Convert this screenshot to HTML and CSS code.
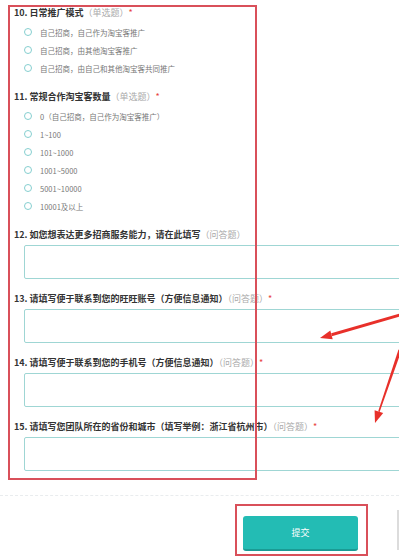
FILE: index.html
```
<!DOCTYPE html>
<html>
<head>
	<meta charset="utf-8">
	<title>问卷</title>
	<link rel="stylesheet" href="styles.css">
</head>
<body>

	<main class="page">
		<div class="question first">
			<div class="q-title">10. 日常推广模式<span class="q-type">（单选题）</span><span class="star">*</span></div>
			<ul class="options">
				<li><span class="radio"></span>自己招商，自己作为淘宝客推广</li>
				<li><span class="radio"></span>自己招商，由其他淘宝客推广</li>
				<li><span class="radio"></span>自己招商，由自己和其他淘宝客共同推广</li>
			</ul>
		</div>

		<div class="question">
			<div class="q-title">11. 常规合作淘宝客数量<span class="q-type">（单选题）</span><span class="star">*</span></div>
			<ul class="options">
				<li><span class="radio"></span>0（自己招商，自己作为淘宝客推广）</li>
				<li><span class="radio"></span>1~100</li>
				<li><span class="radio"></span>101~1000</li>
				<li><span class="radio"></span>1001~5000</li>
				<li><span class="radio"></span>5001~10000</li>
				<li><span class="radio"></span>10001及以上</li>
			</ul>
		</div>

		<div class="question">
			<div class="q-title">12. 如您想表达更多招商服务能力，请在此填写<span class="q-type">（问答题）</span></div>
			<textarea class="answer"></textarea>
		</div>

		<div class="question">
			<div class="q-title">13. 请填写便于联系到您的旺旺账号（方便信息通知）<span class="q-type">（问答题）</span><span class="star">*</span></div>
			<textarea class="answer"></textarea>
		</div>

		<div class="question">
			<div class="q-title">14. 请填写便于联系到您的手机号（方便信息通知）<span class="q-type">（问答题）</span><span class="star">*</span></div>
			<textarea class="answer"></textarea>
		</div>

		<div class="question">
			<div class="q-title">15. 请填写您团队所在的省份和城市（填写举例：浙江省杭州市）<span class="q-type">（问答题）</span><span class="star">*</span></div>
			<textarea class="answer"></textarea>
		</div>

		<div class="footer">
			<button class="submit-btn">提交</button>
			<span class="edge"></span>
		</div>

		<!-- annotations drawn over the form -->
		<div class="mark mark-form"></div>
		<div class="mark mark-btn"></div>
		<svg class="arrows" width="399" height="557" viewBox="0 0 399 557">
			<polygon points="400,313.5 400,316.5 331.8,336.2 331.2,333.2" />
			<polygon points="320,338 332.7,339.2 330.3,330.4" />
			<polygon points="398.5,349.5 401.5,350.5 379.6,412 378.2,411.3" />
			<polygon points="375,423 383.2,413.1 374.6,410.2" />
		</svg>
	</main>

</body>
</html>
```

FILE: styles.css
```
*{
	margin: 0;
	padding: 0;
	box-sizing: border-box;
}
html, body{
	background: #fff;
	overflow: hidden;
}
.page{
	position: relative;
	width: 399px;
	height: 557px;
	overflow: hidden;
	padding: 7px 0 0 14px;
	font-family: "Noto Sans CJK SC", "Noto Sans", sans-serif;
}
.question{
	margin-top: 14px;
}
.question.first{
	margin-top: 0;
}
.q-title{
	height: 12px;
	line-height: 12px;
	font-size: 9px;
	font-weight: bold;
	color: #333;
	white-space: nowrap;
}
.q-type{
	font-weight: normal;
	color: #aaa;
}
.star{
	font-weight: normal;
	color: #e8433b;
}
.options{
	list-style: none;
	margin-top: 4px;
	padding-left: 10px;
}
.options li{
	display: flex;
	align-items: center;
	height: 18px;
	font-size: 7.5px;
	color: #777;
	white-space: nowrap;
}
.radio{
	width: 8px;
	height: 8px;
	border: 1px solid #86cfd0;
	border-radius: 50%;
	margin-right: 8px;
}
.answer{
	display: block;
	width: 440px;
	height: 34px;
	margin: 4px 0 0 10px;
	border: solid 1px #9fd6d4;
	border-radius: 2px;
	resize: none;
	background: #fff;
}
.footer{
	position: relative;
	margin: 24px 0 0 -14px;
	padding: 20px 0 0 243px;
	border-top: 1px dashed #e9ecee;
}
.submit-btn{
	display: block;
	width: 115px;
	height: 35px;
	background: #23bcb4;
	color: #fff;
	font-family: "Noto Sans CJK SC", sans-serif;
	font-size: 9px;
	border: 0;
	border-bottom: 2px solid #1a9b94;
	border-radius: 3px;
}
.edge{
	position: absolute;
	left: 397px;
	top: 14px;
	width: 2px;
	height: 40px;
	background: #dcdcdc;
}
.mark{
	position: absolute;
	border: 2px solid #d9505a;
}
.mark-form{
	left: 8px;
	top: 5px;
	width: 249px;
	height: 475px;
}
.mark-btn{
	left: 235px;
	top: 504px;
	width: 133px;
	height: 52px;
}
.arrows{
	position: absolute;
	left: 0;
	top: 0;
	fill: #e8302a;
}
```
